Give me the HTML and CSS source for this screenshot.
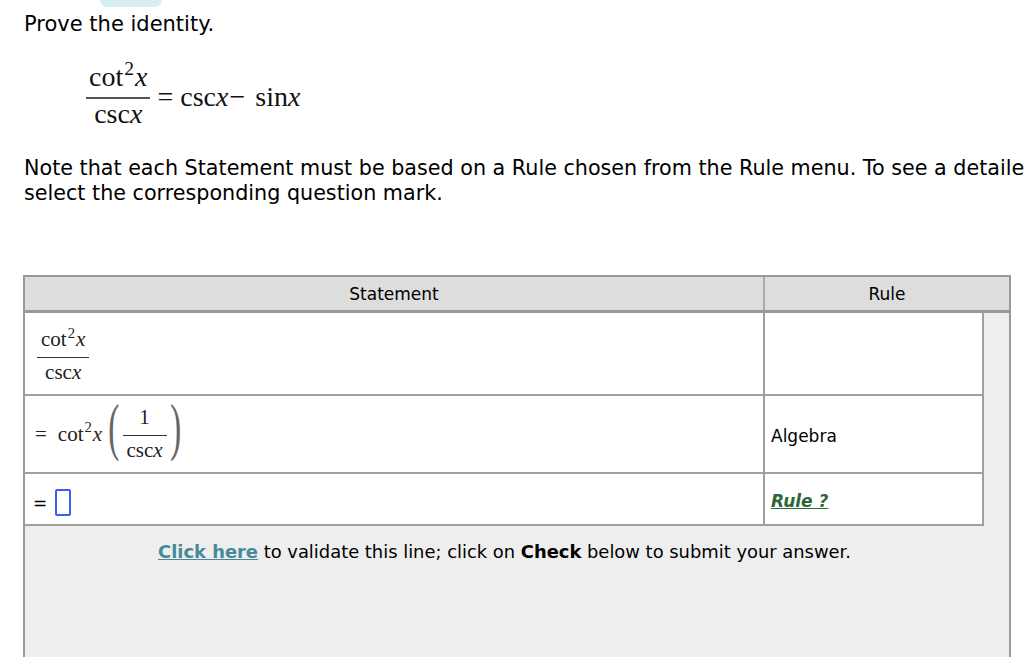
FILE: index.html
```html
<!DOCTYPE html>
<html>
<head>
<meta charset="utf-8">
<title>Prove the identity</title>
<link rel="stylesheet" href="styles.css">
</head>
<body>
<div class="tab"></div>
<h1 class="title">Prove the identity.</h1>
<div class="identity">
  <span class="frac">
    <span class="num">cot<span class="sup">2</span><i class="var">x</i></span>
    <span class="bar"></span>
    <span class="den">csc<i class="var">x</i></span>
  </span>
  <span class="rhs"><span class="rel">=</span>csc<i class="var">x</i><span class="bin">−</span>sin<i class="var">x</i></span>
</div>
<p class="note">Note that each Statement must be based on a Rule chosen from the Rule menu. To see a detailed explanation of a Rule,<br>select the corresponding question mark.</p>
<div class="sheet">
  <div class="head">
    <div class="hcell c1">Statement</div>
    <div class="hcell c2">Rule</div>
  </div>
  <div class="rows">
    <div class="row r1">
      <div class="stmt">
        <span class="math frac small f1">
          <span class="num">cot<span class="sup">2</span><i class="var">x</i></span>
          <span class="bar"></span>
          <span class="den">csc<i class="var">x</i></span>
        </span>
      </div>
      <div class="rule"></div>
    </div>
    <div class="row r2">
      <div class="stmt">
        <span class="math eq">=</span>
        <span class="math term">cot<span class="sup">2</span><i class="var">x</i></span>
        <span class="math paren lp">(</span>
        <span class="math frac small">
          <span class="num">1</span>
          <span class="bar"></span>
          <span class="den">csc<i class="var">x</i></span>
        </span>
        <span class="math paren rp">)</span>
      </div>
      <div class="rule">Algebra</div>
    </div>
    <div class="row r3">
      <div class="stmt">
        <span class="eq3">=</span>
        <span class="answer-box"></span>
      </div>
      <div class="rule"><a class="rule-link">Rule ?</a></div>
    </div>
  </div>
  <p class="validate"><a class="click">Click here</a> to validate this line; click on <b>Check</b> below to submit your answer.</p>
</div>
</body>
</html>
```

FILE: styles.css
```css
html, body {
  margin: 0;
  overflow: hidden;
}
body {
  font-family: "DejaVu Sans", Verdana, sans-serif;
  color: #000;
  background: #fff;
}
.tab {
  margin-left: 100px;
  width: 62px;
  height: 7px;
  background: #d7eef3;
  border-radius: 0 0 16px 16px;
}
.title {
  margin: 5px 0 0 24px;
  font-size: 21px;
  line-height: 24px;
  font-weight: normal;
}
.identity {
  margin: 26px 0 0 86px;
  display: flex;
  align-items: flex-start;
  font-family: "Liberation Serif", "Times New Roman", serif;
  font-size: 28px;
  line-height: 30px;
  color: #111;
}
.var {
  font-style: italic;
}
.frac {
  display: inline-flex;
  flex-direction: column;
  align-items: center;
}
.frac .num, .frac .den {
  padding: 0 3px;
  white-space: nowrap;
}
.frac .bar {
  align-self: stretch;
  height: 2px;
  background: #555;
  margin-top: 5px;
}
.sup {
  font-size: 0.7em;
  vertical-align: 0.56em;
  line-height: 0;
  margin: 0 1px 0 1px;
}
.rhs {
  margin: 20px 0 0 7px;
  white-space: nowrap;
}
.rel {
  margin-right: 7px;
}
.bin {
  margin: 0 10px 0 1px;
}
.note {
  margin: 27px 0 0 24px;
  font-size: 20.7px;
  line-height: 25px;
  white-space: nowrap;
}
.sheet {
  margin: 69px 0 0 23px;
  width: 984px;
  border: 2px solid #999;
  border-bottom: 0;
  background: #eee;
  padding-bottom: 300px;
}
.head {
  display: flex;
  background: #ddd;
  border-bottom: 3px solid #999;
  font-size: 17px;
  line-height: 20px;
}
.hcell {
  padding: 7px 0 6px;
  text-align: center;
}
.head .c1 {
  width: 738px;
  border-right: 2px solid #aaa;
}
.head .c2 {
  flex: 1;
}
.rows {
  width: 957px;
  border-right: 2px solid #a0a0a0;
  background: #fff;
}
.row {
  display: flex;
  border-bottom: 2px solid #a0a0a0;
}
.stmt {
  box-sizing: border-box;
  width: 740px;
  border-right: 2px solid #a0a0a0;
  display: flex;
  align-items: center;
  padding-left: 10px;
}
.rule {
  flex: 1;
  display: flex;
  align-items: center;
  padding: 4px 0 0 6px;
  font-size: 17px;
  line-height: 20px;
}
.math {
  font-family: "Liberation Serif", "Times New Roman", serif;
  font-size: 21px;
  line-height: 24px;
  color: #222;
}
.small .bar {
  height: 1px;
  background: #333;
  margin-top: 6px;
}
.small .den {
  margin-top: 2px;
}
.small .num, .small .den {
  padding: 0 4px;
}
.r1 .stmt {
  padding-top: 14px;
  padding-bottom: 10px;
}
.f1 {
  margin-left: 2px;
}
.r2 .stmt {
  padding-top: 9px;
  padding-bottom: 10px;
}
.eq {
  margin-right: 11px;
}
.term {
  white-space: nowrap;
}
.paren {
  display: inline-block;
  font-size: 22px;
  color: #666;
  transform: translateY(-6px) scale(1.5, 2.9);
}
.lp {
  margin: 0 5px 0 8px;
}
.rp {
  margin-left: 5px;
}
.r3 .stmt {
  padding-top: 15px;
  padding-bottom: 8px;
}
.eq3 {
  font-size: 17px;
  margin-left: -2px;
}
.answer-box {
  box-sizing: border-box;
  width: 16px;
  height: 27px;
  border: 2px solid #3f5cf2;
  border-radius: 2px;
  margin-left: 8px;
}
.rule-link {
  color: #2d673a;
  font-weight: bold;
  font-style: italic;
  text-decoration: underline;
}
.validate {
  margin: 0;
  width: 959px;
  padding-top: 16px;
  text-align: center;
  font-size: 17.9px;
  line-height: 20px;
}
.click {
  color: #468a9a;
  font-weight: bold;
  text-decoration: underline;
}
```
